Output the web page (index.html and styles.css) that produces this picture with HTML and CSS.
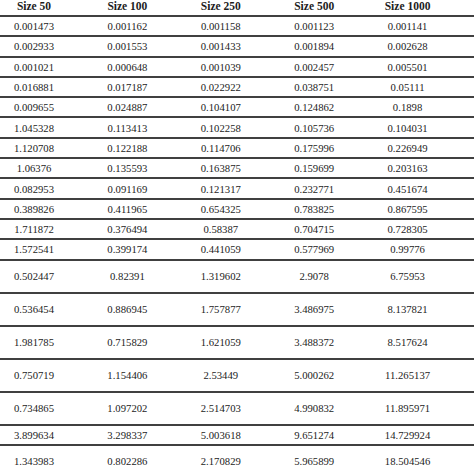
FILE: index.html
```html
<!DOCTYPE html>
<html>
<head>
<meta charset="utf-8">
<link rel="stylesheet" href="styles.css">
</head>
<body>
<div class="table">
  <div class="row head"><span>Size 50</span><span>Size 100</span><span>Size 250</span><span>Size 500</span><span>Size 1000</span></div>
  <div class="row"><span>0.001473</span><span>0.001162</span><span>0.001158</span><span>0.001123</span><span>0.001141</span></div>
  <div class="row"><span>0.002933</span><span>0.001553</span><span>0.001433</span><span>0.001894</span><span>0.002628</span></div>
  <div class="row"><span>0.001021</span><span>0.000648</span><span>0.001039</span><span>0.002457</span><span>0.005501</span></div>
  <div class="row"><span>0.016881</span><span>0.017187</span><span>0.022922</span><span>0.038751</span><span>0.05111</span></div>
  <div class="row"><span>0.009655</span><span>0.024887</span><span>0.104107</span><span>0.124862</span><span>0.1898</span></div>
  <div class="row"><span>1.045328</span><span>0.113413</span><span>0.102258</span><span>0.105736</span><span>0.104031</span></div>
  <div class="row"><span>1.120708</span><span>0.122188</span><span>0.114706</span><span>0.175996</span><span>0.226949</span></div>
  <div class="row"><span>1.06376</span><span>0.135593</span><span>0.163875</span><span>0.159699</span><span>0.203163</span></div>
  <div class="row"><span>0.082953</span><span>0.091169</span><span>0.121317</span><span>0.232771</span><span>0.451674</span></div>
  <div class="row"><span>0.389826</span><span>0.411965</span><span>0.654325</span><span>0.783825</span><span>0.867595</span></div>
  <div class="row"><span>1.711872</span><span>0.376494</span><span>0.58387</span><span>0.704715</span><span>0.728305</span></div>
  <div class="row"><span>1.572541</span><span>0.399174</span><span>0.441059</span><span>0.577969</span><span>0.99776</span></div>
  <div class="row tall"><span>0.502447</span><span>0.82391</span><span>1.319602</span><span>2.9078</span><span>6.75953</span></div>
  <div class="row tall"><span>0.536454</span><span>0.886945</span><span>1.757877</span><span>3.486975</span><span>8.137821</span></div>
  <div class="row tall"><span>1.981785</span><span>0.715829</span><span>1.621059</span><span>3.488372</span><span>8.517624</span></div>
  <div class="row tall"><span>0.750719</span><span>1.154406</span><span>2.53449</span><span>5.000262</span><span>11.265137</span></div>
  <div class="row tall"><span>0.734865</span><span>1.097202</span><span>2.514703</span><span>4.990832</span><span>11.895971</span></div>
  <div class="row"><span>3.899634</span><span>3.298337</span><span>5.003618</span><span>9.651274</span><span>14.729924</span></div>
  <div class="row tall last"><span>1.343983</span><span>0.802286</span><span>2.170829</span><span>5.965899</span><span>18.504546</span></div>
</div>
</body>
</html>
```
FILE: styles.css
```css
html, body {
  margin: 0;
  padding: 0;
  background: #ffffff;
  overflow: hidden;
}
.table {
  width: 474px;
  font-family: "Liberation Serif", "Times New Roman", serif;
  font-size: 10.7px;
  color: #1c1c1c;
}
.row {
  display: grid;
  grid-template-columns: repeat(5, 68px);
  column-gap: 25.4px;
  align-items: center;
  height: 18.3px;
  border-bottom: 2px solid #404040;
}
.row span {
  text-align: center;
  white-space: nowrap;
}
.head {
  height: 15px;
  font-weight: bold;
  font-size: 11.5px;
  align-items: start;
  line-height: 12px;
}
.tall {
  height: 31px;
}
.last {
  border-bottom: none;
}
```
